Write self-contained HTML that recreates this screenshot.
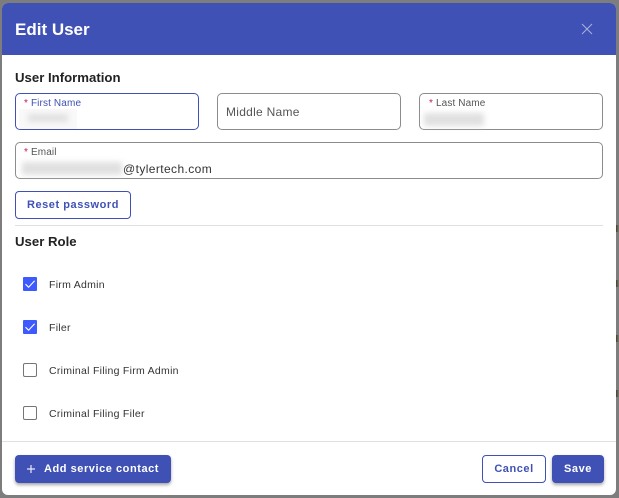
<!DOCTYPE html>
<html>
<head>
<meta charset="utf-8">
<style>
html,body{margin:0;padding:0;width:619px;height:498px;overflow:hidden;background:#7d7d7d;font-family:"Liberation Sans",sans-serif;}
.abs{position:absolute;box-sizing:border-box;white-space:nowrap;}
#dlg{left:2px;top:3px;width:614px;height:492px;background:#fff;border-radius:6px;overflow:hidden;}
#hdr{left:2px;top:3px;width:614px;height:52px;background:#3f51b5;border-radius:6px 6px 0 0;}
.mk{left:616px;width:3px;height:7px;background:linear-gradient(90deg,#4a4020,#7d7d7d);}
.field{border:1px solid #8c8c8c;border-radius:5px;background:#fff;}
.lab{font-size:10px;line-height:12px;color:#555;letter-spacing:.13px;}
.req{color:#c2185b;}
.blur{background:#e0e0e0;filter:blur(3px);}
.white{background:#f9f9f9;}
h3{margin:0;font-size:13.2px;font-weight:bold;color:#222;line-height:16px;}
.cb{left:23px;width:14px;height:14px;border-radius:1px;}
.off{border:1.5px solid #757575;background:#fff;border-radius:2px;}
.on{background:#3d5afe;}
.cl{left:49px;font-size:10.5px;line-height:14px;color:#333;letter-spacing:.28px;}
.btn{font-size:11px;font-weight:bold;letter-spacing:.55px;text-align:center;border-radius:4px;}
.solid{background:#3f51b5;color:#fff;box-shadow:0 2px 3px rgba(0,0,0,.35);}
.outl{background:#fff;color:#3f51b5;border:1.5px solid #3f51b5;}
</style>
</head>
<body>
<div class="abs mk" style="top:225px;"></div>
<div class="abs mk" style="top:280px;"></div>
<div class="abs mk" style="top:335px;"></div>
<div class="abs mk" style="top:390px;"></div>
<div class="abs" id="dlg"></div>
<div class="abs" id="hdr"></div>
<div class="abs" style="left:15px;top:19px;font-size:17px;line-height:22px;font-weight:bold;color:#fff;">Edit User</div>
<svg class="abs" style="left:581px;top:23px;" width="12" height="12" viewBox="0 0 12 12"><path d="M1 1L11 11M11 1L1 11" stroke="#a9b2de" stroke-width="1" fill="none"/></svg>

<h3 class="abs" style="left:15px;top:70px;">User Information</h3>

<div class="abs field" style="left:15px;top:93px;width:184px;height:37px;border:1.5px solid #3f51b5;"></div>
<div class="abs lab" style="left:24px;top:98px;color:#3f51b5;"><span class="req">*</span> First Name</div>
<div class="abs white" style="left:19px;top:109px;width:58px;height:20px;"></div>
<div class="abs blur" style="left:28px;top:114px;width:40px;height:8px;"></div>

<div class="abs field" style="left:217px;top:93px;width:184px;height:37px;"></div>
<div class="abs" style="left:226px;top:105px;font-size:12px;line-height:14px;color:#555;letter-spacing:.27px;">Middle Name</div>

<div class="abs field" style="left:419px;top:93px;width:184px;height:37px;"></div>
<div class="abs lab" style="left:429px;top:98px;"><span class="req">*</span> Last Name</div>
<div class="abs blur" style="left:424px;top:113px;width:60px;height:13px;"></div>

<div class="abs field" style="left:15px;top:142px;width:588px;height:37px;"></div>
<div class="abs lab" style="left:24px;top:147px;"><span class="req">*</span> Email</div>
<div class="abs blur" style="left:22px;top:162px;width:100px;height:13px;"></div>
<div class="abs" style="left:123px;top:162px;font-size:12px;line-height:14px;color:#333;letter-spacing:.4px;">@tylertech.com</div>

<div class="abs btn outl" style="left:15px;top:191px;width:116px;height:28px;line-height:25px;padding-top:1px;">Reset password</div>
<div class="abs" style="left:15px;top:225px;width:588px;height:1px;background:#e0e0e0;"></div>

<h3 class="abs" style="left:15px;top:234px;">User Role</h3>

<div class="abs cb on" style="top:277px;"><svg width="14" height="14" viewBox="0 0 14 14" style="display:block"><path d="M2.5 7.2L5.6 10.2L11.6 3.8" stroke="#fff" stroke-width="1.1" fill="none"/></svg></div>
<div class="abs cl" style="top:278px;">Firm Admin</div>
<div class="abs cb on" style="top:320px;"><svg width="14" height="14" viewBox="0 0 14 14" style="display:block"><path d="M2.5 7.2L5.6 10.2L11.6 3.8" stroke="#fff" stroke-width="1.1" fill="none"/></svg></div>
<div class="abs cl" style="top:321px;">Filer</div>
<div class="abs cb off" style="top:363px;"></div>
<div class="abs cl" style="top:364px;">Criminal Filing Firm Admin</div>
<div class="abs cb off" style="top:406px;"></div>
<div class="abs cl" style="top:407px;">Criminal Filing Filer</div>

<div class="abs" style="left:2px;top:441px;width:614px;height:1px;background:#e0e0e0;"></div>

<div class="abs btn solid" style="left:15px;top:455px;width:156px;height:28px;"></div>
<svg class="abs" style="left:26px;top:464px;" width="10" height="10" viewBox="0 0 10 10"><path d="M5 1V9M1 5H9" stroke="#e8eaf6" stroke-width="1.2" fill="none"/></svg>
<div class="abs btn" style="left:44px;top:455px;height:28px;line-height:27px;padding-top:1px;color:#fff;">Add service contact</div>

<div class="abs btn outl" style="left:482px;top:455px;width:64px;height:28px;line-height:25px;padding-top:1px;">Cancel</div>
<div class="abs btn solid" style="left:552px;top:455px;width:52px;height:28px;line-height:27px;padding-top:1px;">Save</div>
</body>
</html>
